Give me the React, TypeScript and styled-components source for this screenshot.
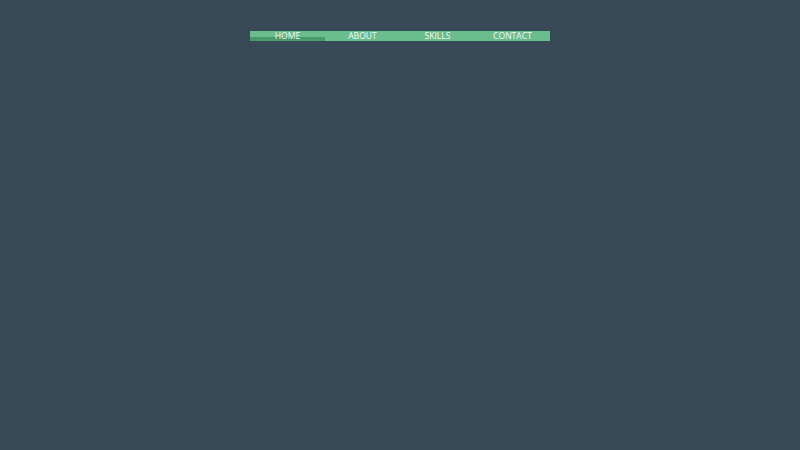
import React from 'react'
import styled, { createGlobalStyle } from 'styled-components'

const Global = createGlobalStyle`
  html, body {
    margin: 0;
    height: 100%;
    background: #374a56;
    font-family: "Open Sans", "Noto Sans", sans-serif;
  }
`

const Page = styled.div`
  padding-top: 31px;
  display: flex;
  justify-content: center;
`

const Nav = styled.nav`
  width: 300px;
  height: 10px;
  display: flex;
  background: #6abd8c;
`

const Item = styled.a<{ $active?: boolean }>`
  position: relative;
  flex: 1;
  font-size: 8.6px;
  line-height: 10px;
  color: #f2f8f4;
  text-align: center;
  text-transform: uppercase;
  text-decoration: none;
  span { position: relative; z-index: 1; }
  &::after {
    content: '';
    display: ${p => (p.$active ? 'block' : 'none')};
    position: absolute;
    left: 0;
    right: 0;
    bottom: 0;
    height: 4px;
    background: #4b9a69;
  }
`

const links = ['Home', 'About', 'Skills', 'Contact']

const App = () => {
  return <>
    <Global />
    <Page>
      <Nav>
        {links.map((l, i) => <Item key={l} href='#' $active={i === 0}><span>{l}</span></Item>)}
      </Nav>
    </Page>
  </>
}

export default App
